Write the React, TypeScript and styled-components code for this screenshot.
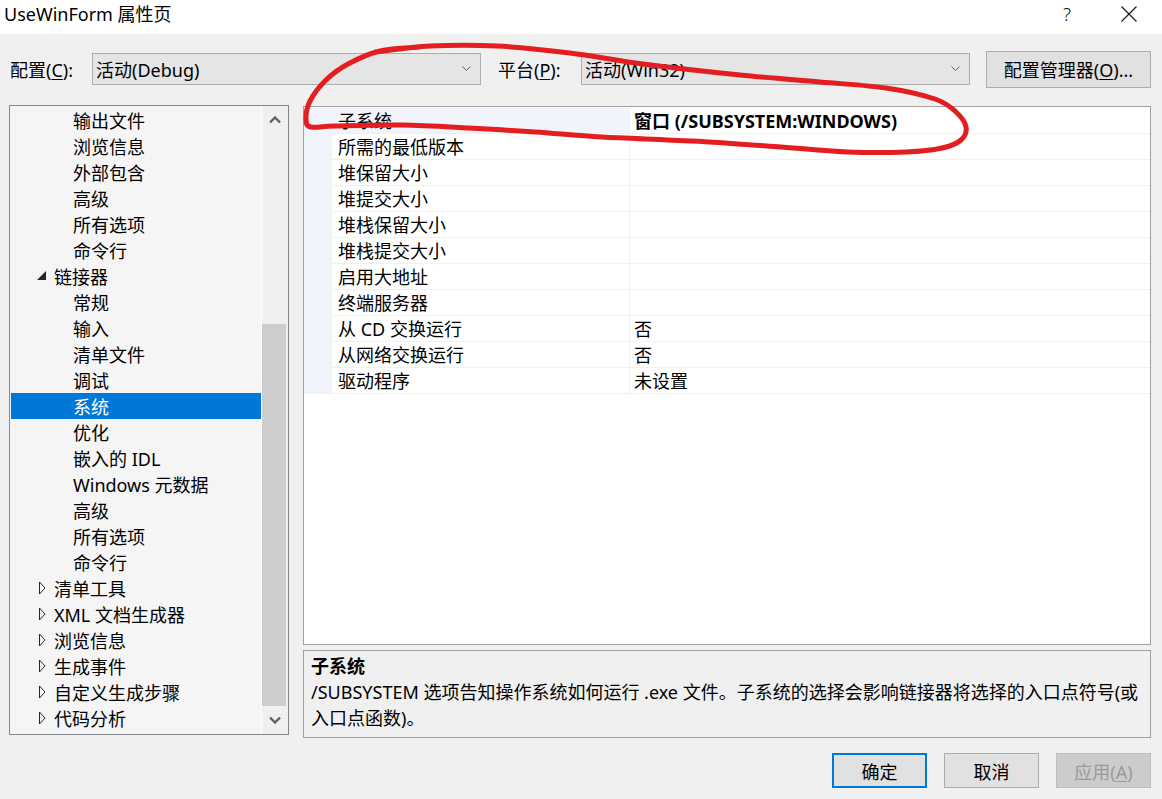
import React from 'react';
import styled, { createGlobalStyle } from 'styled-components';

const GlobalStyle = createGlobalStyle`
  html, body {
    margin: 0;
    padding: 0;
    background: #f0f0f0;
  }
  body {
    font-family: "Segoe UI", "Noto Sans", "Noto Sans CJK SC", sans-serif;
    font-size: 18px;
    color: #000;
  }
`;

const Window = styled.div`
  position: relative;
  width: 1162px;
  height: 799px;
  display: flex;
  flex-direction: column;
  background: #f0f0f0;
  overflow: hidden;
`;

const TitleBar = styled.header`
  height: 34px;
  flex: none;
  background: #fff;
  display: flex;
  align-items: flex-start;
`;

const Title = styled.div`
  padding-left: 4px;
  line-height: 28px;
  font-size: 18px;
  white-space: nowrap;
`;

const CaptionButton = styled.div<{ $width: number }>`
  width: ${({ $width }) => $width}px;
  height: 28px;
  display: flex;
  align-items: center;
  justify-content: center;
  font-size: 19px;
  font-weight: 300;
  color: #111;
`;

const Spacer = styled.div`
  flex: 1;
`;

const ConfigRow = styled.div`
  margin-top: 16px;
  height: 38px;
  flex: none;
  display: flex;
  align-items: center;
  padding: 0 11px 0 10px;
`;

const Label = styled.div<{ $width: number }>`
  width: ${({ $width }) => $width}px;
  flex: none;
  white-space: nowrap;
`;

const Key = styled.span`
  text-decoration: underline;
  text-underline-offset: 2px;
`;

const Select = styled.div`
  width: 389px;
  height: 32px;
  box-sizing: border-box;
  flex: none;
  background: #e5e5e5;
  border: 1px solid #adadad;
  display: flex;
  align-items: center;
  padding: 0 9px 0 3px;
`;

const SelectText = styled.span`
  flex: 1;
  white-space: nowrap;
`;

const Button = styled.button<{ $focused?: boolean; $disabled?: boolean }>`
  height: 36px;
  box-sizing: border-box;
  font: inherit;
  font-size: 18px;
  padding: 0;
  white-space: nowrap;
  background: ${({ $disabled }) => ($disabled ? '#cccccc' : '#e1e1e1')};
  color: ${({ $disabled }) => ($disabled ? '#9a9a9a' : '#000')};
  border: ${({ $focused, $disabled }) =>
    $focused ? '2px solid #0078d7' : $disabled ? '1px solid #bfbfbf' : '1px solid #adadad'};
`;

const ManagerButton = styled(Button)`
  margin-left: 16px;
  width: 166px;
  height: 37px;
`;

const Main = styled.div`
  margin-top: 17px;
  height: 633px;
  flex: none;
  display: flex;
  gap: 14px;
  padding: 0 11px 0 9px;
`;

const Tree = styled.div`
  width: 280px;
  height: 630px;
  box-sizing: border-box;
  flex: none;
  border: 1px solid #828790;
  background: #f5f5f5;
  display: flex;
`;

const TreeList = styled.div`
  flex: 1;
  padding: 1px 0 0 1px;
  overflow: hidden;
`;

const TreeRow = styled.div<{ $level: number; $selected?: boolean }>`
  height: 26px;
  display: flex;
  align-items: center;
  padding-left: ${({ $level }) => ($level === 1 ? 24 : 62)}px;
  background: ${({ $selected }) => ($selected ? '#0078d7' : 'transparent')};
  color: ${({ $selected }) => ($selected ? '#fff' : '#000')};
  white-space: nowrap;
`;

const Expander = styled.span`
  width: 19px;
  height: 26px;
  flex: none;
  display: flex;
  align-items: center;
`;

const ScrollBar = styled.div`
  width: 26px;
  flex: none;
  border-left: 1px solid #fff;
  background: #f0f0f0;
  display: flex;
  flex-direction: column;
  align-items: stretch;
`;

const ScrollArrow = styled.div`
  height: 28px;
  display: flex;
  align-items: center;
  justify-content: center;
`;

const ScrollTrack = styled.div`
  flex: 1;
  display: flex;
  flex-direction: column;
  padding-right: 2px;
`;

const ScrollThumb = styled.div<{ $top: number }>`
  margin-top: ${({ $top }) => $top}px;
  flex: 1;
  background: #cdcdcd;
`;

const RightColumn = styled.div`
  flex: 1;
  display: flex;
  flex-direction: column;
  gap: 5px;
  padding-top: 1px;
`;

const Grid = styled.div`
  flex: 1;
  border: 1px solid #a0a0a0;
  background: #fff;
  padding-top: 1px;
`;

const PropRow = styled.div`
  height: 26px;
  display: grid;
  grid-template-columns: 28px 298px 1fr;
`;

const Gutter = styled.div`
  background: #f0f3f9;
`;

const NameCell = styled.div<{ $selected?: boolean }>`
  background: ${({ $selected }) => ($selected ? '#f1f4fa' : '#fff')};
  border-bottom: 1px solid #eef0f6;
  border-right: 1px solid #eef0f6;
  padding: 2px 0 0 6px;
  line-height: 23px;
  white-space: nowrap;
`;

const ValueCell = styled.div<{ $bold?: boolean }>`
  border-bottom: 1px solid #eef0f6;
  padding: 2px 0 0 4px;
  line-height: 23px;
  font-weight: ${({ $bold }) => ($bold ? 700 : 400)};
  white-space: nowrap;
`;

const Description = styled.div`
  height: 88px;
  box-sizing: border-box;
  flex: none;
  border: 1px solid #a0a0a0;
  background: #f0f0f0;
  padding: 2px 6px 0 7px;
  line-height: 26px;
`;

const DescTitle = styled.div`
  font-weight: 700;
`;

const Footer = styled.div`
  margin-top: 15px;
  display: flex;
  justify-content: flex-end;
  gap: 17px;
  padding-right: 11px;
`;

const DialogButton = styled(Button)`
  width: 95px;
  height: 35px;
`;

const Annotation = styled.svg`
  position: absolute;
  left: 0;
  top: 0;
  pointer-events: none;
`;

const treeItems: { label: string; level: number; state?: 'open' | 'closed'; selected?: boolean }[] = [
  { label: '输出文件', level: 2 },
  { label: '浏览信息', level: 2 },
  { label: '外部包含', level: 2 },
  { label: '高级', level: 2 },
  { label: '所有选项', level: 2 },
  { label: '命令行', level: 2 },
  { label: '链接器', level: 1, state: 'open' },
  { label: '常规', level: 2 },
  { label: '输入', level: 2 },
  { label: '清单文件', level: 2 },
  { label: '调试', level: 2 },
  { label: '系统', level: 2, selected: true },
  { label: '优化', level: 2 },
  { label: '嵌入的 IDL', level: 2 },
  { label: 'Windows 元数据', level: 2 },
  { label: '高级', level: 2 },
  { label: '所有选项', level: 2 },
  { label: '命令行', level: 2 },
  { label: '清单工具', level: 1, state: 'closed' },
  { label: 'XML 文档生成器', level: 1, state: 'closed' },
  { label: '浏览信息', level: 1, state: 'closed' },
  { label: '生成事件', level: 1, state: 'closed' },
  { label: '自定义生成步骤', level: 1, state: 'closed' },
  { label: '代码分析', level: 1, state: 'closed' },
];

const properties: [string, string][] = [
  ['子系统', '窗口 (/SUBSYSTEM:WINDOWS)'],
  ['所需的最低版本', ''],
  ['堆保留大小', ''],
  ['堆提交大小', ''],
  ['堆栈保留大小', ''],
  ['堆栈提交大小', ''],
  ['启用大地址', ''],
  ['终端服务器', ''],
  ['从 CD 交换运行', '否'],
  ['从网络交换运行', '否'],
  ['驱动程序', '未设置'],
];

// hand-drawn red loop around the first property row
const loop: [number, number][] = [
  [375, 52], [430, 46], [497, 46], [570, 53], [643, 64], [740, 75], [820, 82],
  [886, 88], [935, 99], [956, 112], [966, 127], [961, 140], [942, 148], [906, 152],
  [848, 152], [781, 147], [692, 141], [602, 137], [535, 132], [469, 128], [402, 125],
  [335, 126], [311, 127], [306, 119], [310, 101], [326, 80], [348, 64], [380, 51], [420, 47],
];

function smoothPath(pts: [number, number][]) {
  let d = `M${pts[0][0]},${pts[0][1]}`;
  for (let i = 0; i < pts.length - 1; i++) {
    const p0 = pts[i - 1] || pts[i];
    const p1 = pts[i];
    const p2 = pts[i + 1];
    const p3 = pts[i + 2] || p2;
    const c1 = [p1[0] + (p2[0] - p0[0]) / 6, p1[1] + (p2[1] - p0[1]) / 6];
    const c2 = [p2[0] - (p3[0] - p1[0]) / 6, p2[1] - (p3[1] - p1[1]) / 6];
    d += ` C${c1[0]},${c1[1]} ${c2[0]},${c2[1]} ${p2[0]},${p2[1]}`;
  }
  return d;
}

const Chevron = () => (
  <svg width="9" height="6" viewBox="0 0 9 6">
    <path d="M0.5 0.5 L4.5 4.5 L8.5 0.5" fill="none" stroke="#606060" strokeWidth="1" />
  </svg>
);

const ScrollChevron = ({ down }: { down?: boolean }) => (
  <svg width="12" height="8" viewBox="0 0 12 8">
    <path
      d={down ? 'M1 1.5 L6 6.5 L11 1.5' : 'M1 6.5 L6 1.5 L11 6.5'}
      fill="none"
      stroke="#606060"
      strokeWidth="2.4"
    />
  </svg>
);

export default function App() {
  return (
    <Window>
      <GlobalStyle />
      <TitleBar>
        <Title>UseWinForm 属性页</Title>
        <Spacer />
        <CaptionButton $width={62}>?</CaptionButton>
        <CaptionButton $width={62}>
          <svg width="16" height="16" viewBox="0 0 16 16">
            <path d="M0.5 0.5 L15.5 15.5 M15.5 0.5 L0.5 15.5" stroke="#111" strokeWidth="1.1" />
          </svg>
        </CaptionButton>
        <CaptionButton $width={2} />
      </TitleBar>

      <ConfigRow>
        <Label $width={82}>
          配置(<Key>C</Key>):
        </Label>
        <Select>
          <SelectText>活动(Debug)</SelectText>
          <Chevron />
        </Select>
        <Label $width={83} style={{ marginLeft: 17 }}>
          平台(<Key>P</Key>):
        </Label>
        <Select>
          <SelectText>活动(Win32)</SelectText>
          <Chevron />
        </Select>
        <ManagerButton>
          配置管理器(<Key>O</Key>)...
        </ManagerButton>
      </ConfigRow>

      <Main>
        <Tree>
          <TreeList>
            {treeItems.map((item, i) => (
              <TreeRow key={i} $level={item.level} $selected={item.selected}>
                {item.level === 1 && (
                  <Expander>
                    {item.state === 'open' ? (
                      <svg width="12" height="12" viewBox="0 0 12 12">
                        <path d="M2 10 L11 10 L11 1 Z" fill="#262626" />
                      </svg>
                    ) : (
                      <svg width="12" height="14" viewBox="0 0 12 14">
                        <path d="M4.5 1 L10 7 L4.5 13 Z" fill="none" stroke="#262626" strokeWidth="1" />
                      </svg>
                    )}
                  </Expander>
                )}
                {item.label}
              </TreeRow>
            ))}
          </TreeList>
          <ScrollBar>
            <ScrollArrow>
              <ScrollChevron />
            </ScrollArrow>
            <ScrollTrack>
              <ScrollThumb $top={190} />
            </ScrollTrack>
            <ScrollArrow>
              <ScrollChevron down />
            </ScrollArrow>
          </ScrollBar>
        </Tree>

        <RightColumn>
          <Grid>
            {properties.map(([name, value], i) => (
              <PropRow key={name}>
                <Gutter />
                <NameCell $selected={i === 0}>{name}</NameCell>
                <ValueCell $bold={i === 0}>{value}</ValueCell>
              </PropRow>
            ))}
          </Grid>
          <Description>
            <DescTitle>子系统</DescTitle>
            <div>
              /SUBSYSTEM 选项告知操作系统如何运行 .exe 文件。子系统的选择会影响链接器将选择的入口点符号(或入口点函数)。
            </div>
          </Description>
        </RightColumn>
      </Main>

      <Footer>
        <DialogButton $focused>确定</DialogButton>
        <DialogButton>取消</DialogButton>
        <DialogButton $disabled>
          应用(<Key>A</Key>)
        </DialogButton>
      </Footer>

      <Annotation width="1162" height="799" viewBox="0 0 1162 799">
        <path
          d={smoothPath(loop)}
          fill="none"
          stroke="#e41e20"
          strokeWidth="5"
          strokeLinecap="round"
          strokeLinejoin="round"
        />
      </Annotation>
    </Window>
  );
}
